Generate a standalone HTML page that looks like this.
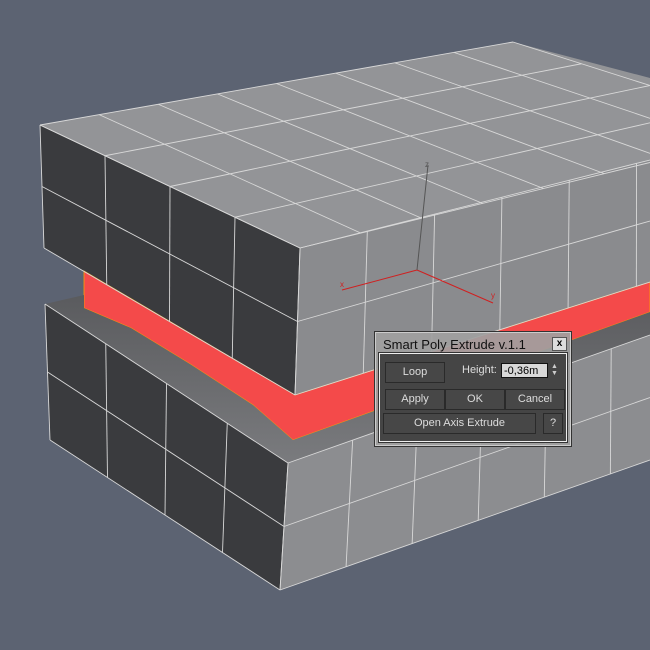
<!DOCTYPE html>
<html><head><meta charset="utf-8"><style>
body{margin:0;width:650px;height:650px;background:#5c6372;overflow:hidden;position:relative;font-family:"Liberation Sans",sans-serif}
svg{position:absolute;left:0;top:0}
.dlg{position:absolute;left:374px;top:331px;width:196px;height:114px;background:rgba(160,160,160,.92);border:1px solid #333;box-shadow:0 0 0 1px #ccc inset}
.title{position:absolute;left:8px;top:5px;font-size:13px;color:#111}
.x{position:absolute;left:177px;top:5px;width:13px;height:12px;border:1px solid #555;background:#ddd;font-size:10px;text-align:center;line-height:12px;font-weight:bold}
.in{position:absolute;left:4px;top:21px;width:186px;height:87px;background:#454545;border:1px solid #eee;outline:1px solid #333}
.b{position:absolute;background:#474747;border:1px solid #2a2a2a;color:#ddd;font-size:11px;text-align:center;box-sizing:border-box}
</style></head><body>
<svg width="650" height="650" id="s">
<defs><linearGradient id="lg" x1="0" y1="0" x2="0" y2="1"><stop offset="0" stop-color="#5a5b5e"/><stop offset="1" stop-color="#7a7b7e"/></linearGradient></defs>
<polygon points="40,125 513,42 650,78 650,160 300,248" fill="#939497"/>
<polygon points="40,125 300,248 295,395 44,248" fill="#3a3b3e"/>
<polygon points="300,248 650,160 650,282 295,395" fill="#8a8b8e"/>
<polygon points="84,271 295,395 650,282 650,312 293,440 253,405 190,364 131,328 84,308" fill="#f44a4a" stroke="#ffa000" stroke-width=".8"/>
<polygon points="45,304 84,295 84,308 131,328 190,364 253,405 293,440 650,312 650,335 288,463" fill="url(#lg)"/>
<polygon points="45,304 288,463 280,590 50,440" fill="#3a3b3e"/>
<polygon points="288,463 650,335 650,460 280,590" fill="#8c8d90"/>
<g id="g" stroke="#d8d8d8" stroke-width="0.9" fill="none"></g>
<g stroke="#d02020" stroke-width="1"><line x1="417" y1="270" x2="342" y2="290"/><line x1="417" y1="270" x2="493" y2="303"/></g>
<line x1="417" y1="270" x2="428" y2="165" stroke="#555"/>
<text x="340" y="287" font-size="8" fill="#d02020">x</text><text x="491" y="298" font-size="8" fill="#d02020">y</text><text x="425" y="167" font-size="8" fill="#555">z</text>
</svg>
<div class="dlg"><div class="title">Smart Poly Extrude v.1.1</div><div class="x">x</div>
<div class="in">
<div class="b" style="left:5px;top:8px;width:60px;height:21px;line-height:19px">Loop</div>
<div style="position:absolute;left:82px;top:10px;color:#ddd;font-size:11px">Height:</div>
<div style="position:absolute;left:121px;top:9px;width:47px;height:15px;background:#d8d8d8;border:1px solid #111;font-size:11px;line-height:15px;box-sizing:border-box;padding-left:2px">-0,36m</div>
<div style="position:absolute;left:171px;top:9px;font-size:7px;color:#ccc;line-height:7px">▲<br>▼</div>
<div class="b" style="left:5px;top:35px;width:60px;height:21px;line-height:19px">Apply</div>
<div class="b" style="left:65px;top:35px;width:60px;height:21px;line-height:19px">OK</div>
<div class="b" style="left:125px;top:35px;width:60px;height:21px;line-height:19px">Cancel</div>
<div class="b" style="left:3px;top:59px;width:153px;height:21px;line-height:19px">Open Axis Extrude</div>
<div class="b" style="left:163px;top:59px;width:20px;height:21px;line-height:19px">?</div>
</div></div>
<script>
var g=document.getElementById('g'),h='';
function L(a,b){h+='<line x1="'+a[0]+'" y1="'+a[1]+'" x2="'+b[0]+'" y2="'+b[1]+'"/>';}
function P(a,b,t){return[a[0]+(b[0]-a[0])*t,a[1]+(b[1]-a[1])*t];}
function grid(A,B,C,D,nu,nv){for(var i=0;i<=nu;i++){var t=i/nu;if(t>1)break;L(P(A,B,t),P(D,C,t));}for(var j=0;j<=nv;j++){var s=j/nv;L(P(A,D,s),P(B,C,s));}}
var A=[40,125],B=[513,42],C=[787,129],D=[300,248];
for(var i=0;i<=8;i++){var t=i/8;var p=P(A,B,t),q=P(D,C,t);if(q[0]>650){var f=(650-p[0])/(q[0]-p[0]);q=P(p,q,f);}L(p,q);}
for(var j=0;j<=4;j++){var s=j/4;var p=P(A,D,s),q=P(B,C,s);var f=(650-p[0])/(q[0]-p[0]);if(f<1)q=P(p,q,f);L(p,q);}
grid([40,125],[300,248],[295,395],[44,248],4,2);
grid([300,248],[650,160],[650,282],[295,395],5.2,2);
grid([45,304],[288,463],[280,590],[50,440],4,2);
grid([288,463],[650,335],[650,460],[280,590],5.6,2);
g.innerHTML=h;
</script>
</body></html>
